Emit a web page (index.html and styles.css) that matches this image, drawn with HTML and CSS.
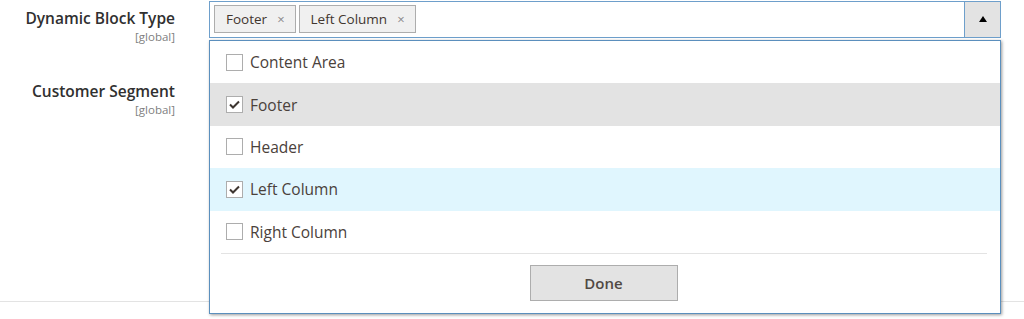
FILE: index.html
```html
<!DOCTYPE html>
<html>
<head>
<meta charset="utf-8">
<link rel="stylesheet" href="styles.css">
</head>
<body>
<div class="fieldset">
  <div class="field">
    <div class="label">
      <span class="label-text">Dynamic Block Type</span>
      <span class="scope">[global]</span>
    </div>
    <div class="control">
      <div class="select">
        <div class="tags">
          <span class="tag">Footer<span class="tag-x">×</span></span>
          <span class="tag">Left Column<span class="tag-x">×</span></span>
        </div>
        <div class="arrow"><span class="tri"></span></div>
      </div>
      <div class="menu">
        <ul class="options">
          <li class="option"><span class="cb"></span>Content Area</li>
          <li class="option hover"><span class="cb"><svg viewBox="0 0 17 17" width="17" height="17"><polyline points="4,8.5 7,11.5 13,5.5" fill="none" stroke="#3d3530" stroke-width="2"/></svg></span>Footer</li>
          <li class="option"><span class="cb"></span>Header</li>
          <li class="option selected"><span class="cb"><svg viewBox="0 0 17 17" width="17" height="17"><polyline points="4,8.5 7,11.5 13,5.5" fill="none" stroke="#3d3530" stroke-width="2"/></svg></span>Left Column</li>
          <li class="option"><span class="cb"></span>Right Column</li>
        </ul>
        <div class="menu-footer">
          <button class="done">Done</button>
        </div>
      </div>
    </div>
  </div>
  <div class="field second">
    <div class="label">
      <span class="label-text">Customer Segment</span>
      <span class="scope">[global]</span>
    </div>
    <div class="control"></div>
  </div>
</div>
</body>
</html>
```
FILE: styles.css
```css
* { box-sizing: border-box; }
html, body { margin: 0; padding: 0; background: #fff; }
body {
  font-family: "Open Sans", "Liberation Sans", sans-serif;
  color: #303030;
  width: 1024px;
  height: 319px;
  overflow: hidden;
}
.fieldset {
  height: 302px;
  border-bottom: 1px solid #e3e3e3;
  padding-top: 1px;
}
.field {
  display: grid;
  grid-template-columns: 175px 792px;
  column-gap: 34px;
}
.field.second { margin-top: 30px; }
.label {
  display: flex;
  flex-direction: column;
  align-items: flex-end;
  padding-top: 7px;
}
.label-text {
  font-size: 15.5px;
  font-weight: 600;
  line-height: 20px;
  color: #303030;
}
.scope {
  font-size: 11.5px;
  line-height: 14px;
  color: #808080;
  margin-top: 2px;
}
.control { position: relative; height: 36px; }
.select {
  display: flex;
  height: 37px;
  border: 1px solid #6e9fcb;
  background: #fff;
}
.tags {
  flex: 1;
  display: flex;
  gap: 3px;
  padding: 3px 4px;
}
.tag {
  display: inline-flex;
  align-items: center;
  height: 28px;
  padding: 0 10px 0 11px;
  border: 1px solid #adadad;
  background: #f0f0f0;
  font-size: 13.5px;
  color: #41362f;
}
.tag-x {
  font-size: 13px;
  color: #8a8a8a;
  margin-left: 10px;
}
.arrow {
  width: 36px;
  border-left: 1px solid #6e9fcb;
  background: #e3e3e3;
  display: flex;
  align-items: center;
  justify-content: center;
}
.tri {
  width: 0;
  height: 0;
  border-left: 4.5px solid transparent;
  border-right: 4.5px solid transparent;
  border-bottom: 6px solid #000;
  margin-top: -1px;
}
.menu {
  position: absolute;
  top: 39px;
  left: 0;
  width: 792px;
  height: 274px;
  background: #fff;
  border: 1px solid #5b8fbd;
  box-shadow: 1px 1px 3px rgba(0, 0, 0, 0.4);
  z-index: 5;
}
.options { list-style: none; margin: 0; padding: 0; }
.option {
  display: flex;
  align-items: center;
  height: 42.4px;
  padding-left: 16px;
  font-size: 15.5px;
  color: #4a413b;
}
.option.hover { background: #e3e3e3; }
.option.selected { background: #e0f6fe; }
.cb {
  width: 17px;
  height: 17px;
  border: 1px solid #adadad;
  background: #fff;
  margin-right: 7px;
  display: inline-flex;
  align-items: center;
  justify-content: center;
}
.cb svg { display: block; margin: -1px; }
.menu-footer {
  margin: 0 13px 0 11px;
  border-top: 1px solid #e3e3e3;
  padding-top: 11px;
  display: flex;
  justify-content: center;
}
.done {
  width: 148px;
  height: 36px;
  border: 1px solid #adadad;
  background: #e3e3e3;
  font-family: "Open Sans", "Liberation Sans", sans-serif;
  font-size: 15px;
  font-weight: 600;
  color: #514943;
  margin-left: -1px;
}
```
